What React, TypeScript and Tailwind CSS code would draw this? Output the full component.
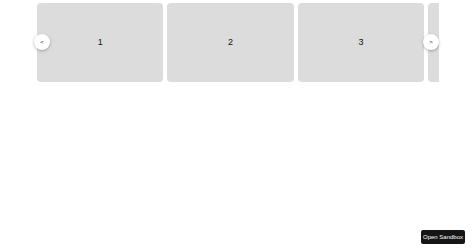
import React from 'react';

const slides = [1, 2, 3, 4];

const App: React.FC = () => {
  return (
    <div className="relative h-[248px] w-[474px] bg-white font-['Liberation_Sans',Arial,sans-serif]">
      {/* Carousel */}
      <div className="relative ml-[37px] mt-[3px] w-[402px]">
        <div className="overflow-hidden">
          <div className="flex gap-[4px]">
            {slides.map((n) => (
              <div
                key={n}
                className="flex h-[79px] w-[126.4px] shrink-0 items-center justify-center rounded-[4px] bg-[#dcdcdc] text-[9px] text-[#111]"
              >
                {n < 4 ? n : ''}
              </div>
            ))}
          </div>
        </div>
        <button className="absolute left-[-3px] top-[31px] flex h-[16px] w-[16px] items-center justify-center rounded-full bg-white text-[6px] text-[#222] shadow-[0_1px_3px_rgba(0,0,0,0.3)]">
          &lt;
        </button>
        <button className="absolute left-[386px] top-[31px] flex h-[16px] w-[16px] items-center justify-center rounded-full bg-white text-[6px] text-[#222] shadow-[0_1px_3px_rgba(0,0,0,0.3)]">
          &gt;
        </button>
      </div>

      <button className="absolute left-[421px] top-[227px] flex h-[14px] w-[44px] items-center justify-center rounded-[2px] bg-[#151515] text-[6px] text-white">
        Open Sandbox
      </button>
    </div>
  );
};

export default App;
